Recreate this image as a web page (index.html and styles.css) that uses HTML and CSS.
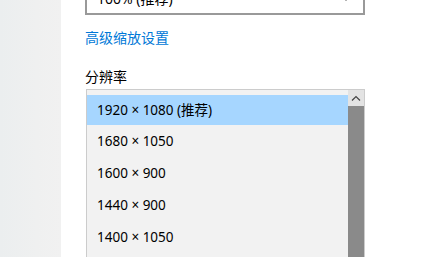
FILE: index.html
```html
<!DOCTYPE html>
<html lang="zh-CN">
<head>
<meta charset="utf-8">
<link rel="stylesheet" href="styles.css">
</head>
<body>
<div class="page">
  <aside class="side"></aside>
  <main class="main">
    <div class="combo">
      <span class="combo-text">100% (推荐)</span>
      <svg class="combo-chev" width="10" height="6" viewBox="0 0 10 6"><polyline points="1,0.5 5,4.5 9,0.5" fill="none" stroke="#555" stroke-width="1"/></svg>
    </div>
    <a class="link" href="#">高级缩放设置</a>
    <div class="label">分辨率</div>
    <div class="list">
      <div class="items">
        <div class="item selected">1920 × 1080 (推荐)</div>
        <div class="item">1680 × 1050</div>
        <div class="item">1600 × 900</div>
        <div class="item">1440 × 900</div>
        <div class="item">1400 × 1050</div>
      </div>
      <div class="scrollbar">
        <div class="sb-btn">
          <svg width="10" height="6" viewBox="0 0 10 6"><polyline points="1,5.5 5,1.5 9,5.5" fill="none" stroke="#444" stroke-width="1.2"/></svg>
        </div>
        <div class="sb-thumb"></div>
      </div>
    </div>
  </main>
</div>
</body>
</html>
```
FILE: styles.css
```css
html, body {
  margin: 0;
  padding: 0;
  background: #ffffff;
  overflow: hidden;
}
body {
  width: 439px;
  height: 257px;
  font-family: "Noto Sans", "Noto Sans CJK SC", sans-serif;
  color: #000;
}
.page {
  display: flex;
  height: 257px;
}
.side {
  width: 61px;
  flex: none;
  background: linear-gradient(90deg, #ebeeef 0%, #eff0f0 60%, #f1f1f1 100%);
}
.main {
  flex: 1;
  padding-left: 24px;
  margin-top: -17px;
}
.combo {
  width: 280px;
  height: 32px;
  box-sizing: border-box;
  border: 2px solid #999999;
  display: flex;
  align-items: center;
  padding: 0 12px 0 10px;
}
.combo-text {
  flex: 1;
  font-size: 14px;
  line-height: 20px;
}
.combo-chev {
  display: block;
}
.link {
  display: block;
  margin-top: 13px;
  font-size: 14px;
  line-height: 20px;
  color: #0078d7;
  text-decoration: none;
}
.label {
  margin-top: 19px;
  font-size: 14px;
  line-height: 20px;
}
.list {
  margin-top: 2px;
  margin-left: 1px;
  width: 279px;
  height: 180px;
  box-sizing: border-box;
  border: 1px solid #cccccc;
  border-bottom: none;
  background: #f2f2f2;
  display: flex;
}
.items {
  flex: 1;
  padding-top: 5px;
}
.item {
  height: 32px;
  line-height: 30px;
  padding-left: 10px;
  font-size: 13.5px;
  color: #000;
}
.item.selected {
  background: #a6d6ff;
  height: 30px;
  margin-bottom: 1px;
}
.scrollbar {
  width: 16px;
  flex: none;
  display: flex;
  flex-direction: column;
}
.sb-btn {
  height: 16px;
  background: #e3e3e3;
  display: flex;
  align-items: center;
  justify-content: center;
}
.sb-btn svg {
  display: block;
}
.sb-thumb {
  flex: 1;
  background: #8a8a8a;
}
```
